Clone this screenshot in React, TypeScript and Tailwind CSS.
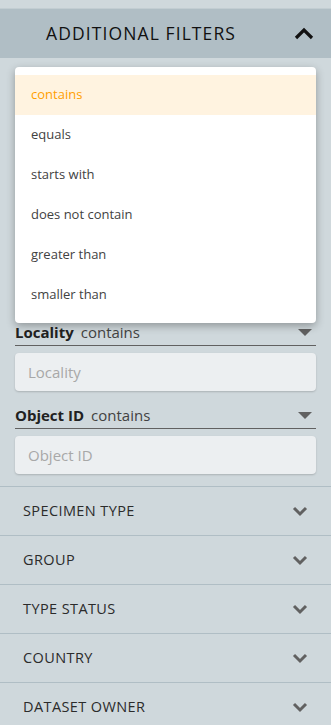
import { useState } from 'react'

const operators = ['contains', 'equals', 'starts with', 'does not contain', 'greater than', 'smaller than']

const fields = ['Locality', 'Object ID']

const sections = ['SPECIMEN TYPE', 'GROUP', 'TYPE STATUS', 'COUNTRY', 'DATASET OWNER']

function ChevronDown() {
  return (
    <svg width="16" height="11" viewBox="0 0 16 11" className="shrink-0">
      <path d="M2 2 L8 8 L14 2" fill="none" stroke="#616161" strokeWidth="3" />
    </svg>
  )
}

function FilterField({ label, last }: { label: string; last?: boolean }) {
  return (
    <div className={last ? 'mb-[12px]' : 'mb-[14px]'}>
      <div className="flex h-[24px] items-center border-b border-[#616161] pb-[2px]">
        <span className="text-[15px] font-bold text-[#212121]">{label}</span>
        <span className="ml-[7px] text-[15px] text-[#424242]">contains</span>
        <svg width="16" height="8" viewBox="0 0 16 8" className="ml-auto mr-[3px]">
          <path d="M1 0 H15 L8 7 Z" fill="#616161" />
        </svg>
      </div>
      <div className="mt-[7px] flex h-[38px] items-center rounded-[4px] bg-[#eceff1] px-[13px] text-[15px] text-[#a8a8a8] shadow-[0_1px_2px_rgba(0,0,0,0.18)]">
        {label}
      </div>
    </div>
  )
}

export default function App() {
  const [selected] = useState('contains')

  return (
    <div className="h-[725px] w-[331px] overflow-hidden bg-[#cfd8dc] font-['Open_Sans',sans-serif]">
      <div className="h-[9px] border-b border-[#c2cdd2] bg-[#cfd8dc]" />
      <div className="flex h-[49px] items-center bg-[#b0bec5] pl-[46px] pr-[16px]">
        <span className="text-[17.5px] font-medium tracking-[1.1px] text-[#111]">ADDITIONAL FILTERS</span>
        <svg width="22" height="14" viewBox="0 0 22 14" className="ml-auto">
          <path d="M3 11 L11 3 L19 11" fill="none" stroke="#111" strokeWidth="3.2" />
        </svg>
      </div>

      <div className="relative border-b border-[#b0bec5] px-[15px] pt-[15px]">
        {/* 열린 연산자 메뉴가 덮고 있는 필드 자리 */}
        <div className="h-[249px]" />
        {fields.map((f, i) => (
          <FilterField key={f} label={f} last={i === fields.length - 1} />
        ))}

        <div className="absolute top-[9px] right-[15px] left-[15px] rounded-[4px] bg-white py-[8px] shadow-[0_3px_8px_rgba(0,0,0,0.3)]">
          {operators.map((op) => (
            <div
              key={op}
              className={
                op === selected
                  ? 'flex h-[40px] items-center bg-[#fff3e0] px-[16px] text-[13px] text-[#ffa000]'
                  : 'flex h-[40px] items-center px-[16px] text-[13px] text-[#424242]'
              }
            >
              {op}
            </div>
          ))}
        </div>
      </div>

      {sections.map((s) => (
        <div key={s} className="flex h-[49px] items-center border-b border-[#b0bec5] px-[23px]">
          <span className="text-[14.5px] font-medium tracking-[0.4px] text-[#2b2b2b]">{s}</span>
          <div className="ml-auto">
            <ChevronDown />
          </div>
        </div>
      ))}
    </div>
  )
}
